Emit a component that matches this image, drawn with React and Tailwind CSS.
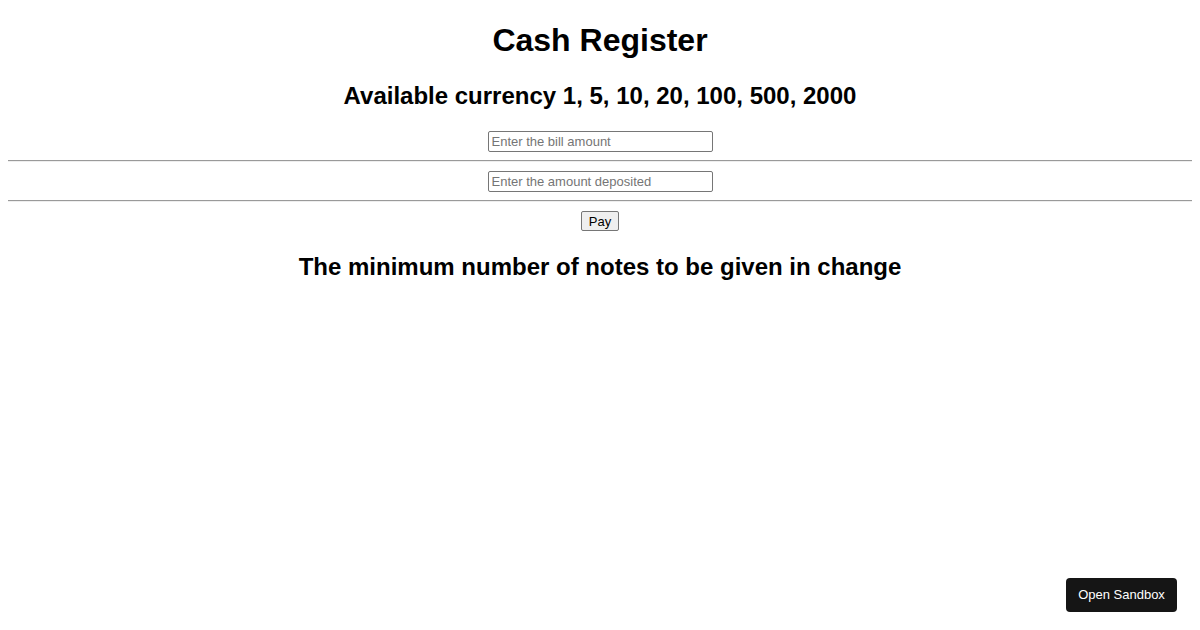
import React from 'react';

const Rule = () => (
  <hr className="w-full border-0 border-t border-t-[#9a9a9a] border-b border-b-[#eeeeee] h-0" />
);

export default function App() {
  return (
    <div className="relative min-h-[630px] bg-white text-black font-['Liberation_Sans',Arial,sans-serif]">
      <div className="flex flex-col items-center px-2 text-center">
        <h1 className="mt-[22px] text-[32px] leading-[37px] font-bold">Cash Register</h1>
        <h2 className="mt-[23px] text-[24px] leading-[28px] font-bold">
          Available currency 1, 5, 10, 20, 100, 500, 2000
        </h2>
        <input
          type="number"
          placeholder="Enter the bill amount"
          className="mt-[21px] mb-2 w-[225px] h-[21px] px-[3px] border border-[#767676] rounded-[2px] text-[13px] placeholder:text-[#757575] outline-none"
        />
        <Rule />
        <input
          type="number"
          placeholder="Enter the amount deposited"
          className="mt-[9px] mb-2 w-[225px] h-[21px] px-[3px] border border-[#767676] rounded-[2px] text-[13px] placeholder:text-[#757575] outline-none"
        />
        <Rule />
        <button className="mt-[9px] w-[38px] h-[20px] bg-[#efefef] border border-[#767676] rounded-[2px] text-[13px] leading-none">
          Pay
        </button>
        <h2 className="mt-[22px] text-[24px] leading-[28px] font-bold">
          The minimum number of notes to be given in change
        </h2>
      </div>
      <button className="absolute right-[23px] bottom-[18px] w-[111px] h-[34px] rounded-[4px] bg-[#151515] text-white text-[13px]">
        Open Sandbox
      </button>
    </div>
  );
}
